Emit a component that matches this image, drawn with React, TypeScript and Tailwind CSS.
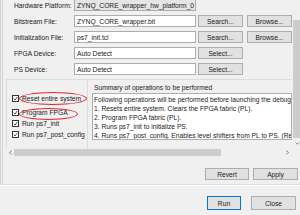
import React from 'react';

const Btn: React.FC<{ label: string; w: string; h?: string; primary?: boolean }> = ({ label, w, h = 'h-[12px]', primary }) => (
  <div
    className={`${w} ${h} shrink-0 flex items-center justify-center bg-[#e1e1e1] border ${
      primary ? 'border-[#0078d7]' : 'border-[#adadad]'
    } text-[#1a1a1a]`}
  >
    {label}
  </div>
);

const Check: React.FC<{ label: string }> = ({ label }) => (
  <div className="h-[11px] flex items-center gap-[3px]">
    <div className="w-[7px] h-[7px] border border-[#333] bg-white flex items-center justify-center">
      <svg width="5" height="5" viewBox="0 0 10 10" fill="none" stroke="#222" strokeWidth="1.6">
        <polyline points="1.5 5.5 4 8 8.5 2" />
      </svg>
    </div>
    <span className="whitespace-nowrap">{label}</span>
  </div>
);

const FormRow: React.FC<{ label: string; value: string; combo?: boolean; buttons: string[] }> = ({ label, value, combo, buttons }) => (
  <div className="h-[12px] flex items-center shrink-0">
    <div className="w-[60px] shrink-0 whitespace-nowrap">{label}</div>
    <div
      className={`w-[122px] h-full shrink-0 border flex items-center px-[2px] whitespace-nowrap overflow-hidden ${
        combo ? 'bg-[#e5e5e5] border-[#acacac] justify-between' : 'bg-white border-[#abadb3]'
      }`}
    >
      <span>{value}</span>
      {combo && (
        <svg width="6" height="4" viewBox="0 0 8 5" fill="none" stroke="#555" strokeWidth="1" className="mr-[3px]">
          <polyline points="1 1 4 4 7 1" />
        </svg>
      )}
    </div>
    <div className="flex ml-[2px] gap-[4px]">
      {buttons.map((b) => (
        <Btn key={b} label={b} w="w-[45px]" />
      ))}
    </div>
  </div>
);

const summary = [
  'Following operations will be performed before launching the debugger.',
  '1. Resets entire system. Clears the FPGA fabric (PL).',
  '2. Program FPGA fabric (PL).',
  '3. Runs ps7_init to initialize PS.',
  '4. Runs ps7_post_config. Enables level shifters from PL to PS. (Requires',
];

export default function App() {
  return (
    <div className="relative w-[300px] h-[215px] overflow-hidden bg-[#f0f0f0] text-[6.7px] leading-[9px] text-[#1a1a1a] font-['Liberation_Sans',Arial,sans-serif] flex flex-col">
      <div className="h-[185px] flex border-b border-[#dcdcdc] shrink-0">
        {/* left tree strip */}
        <div className="w-[10px] bg-white border-r border-[#d5d5d5] flex flex-col justify-between overflow-hidden">
          <div className="flex flex-col pt-[2px]">
            {[']', 'System', 'System', 'Web'].map((t, i) => (
              <div key={i} className="h-[10px] flex justify-end whitespace-nowrap">
                {t}
              </div>
            ))}
          </div>
          <div className="mb-[16px] h-[6px]">
            <svg width="6" height="6" viewBox="0 0 6 6" fill="none" stroke="#666" strokeWidth="0.8">
              <polyline points="-1 2 2 2 2 0.5 5 3 2 5.5 2 4 -1 4" />
            </svg>
          </div>
        </div>

        {/* right pane */}
        <div className="flex-1 flex flex-col border-l border-[#d5d5d5] ml-px pl-[3px]">
          <div className="h-[157px] flex flex-col shrink-0">
            <div className="h-[148px] flex">
              <div className="flex-1 overflow-hidden">
                <div className="-mt-[1px] pl-[8px] flex flex-col gap-[4px]">
                  <FormRow label="Hardware Platform:" value="ZYNQ_CORE_wrapper_hw_platform_0" combo buttons={[]} />
                  <FormRow label="Bitstream File:" value="ZYNQ_CORE_wrapper.bit" buttons={['Search...', 'Browse...']} />
                  <FormRow label="Initialization File:" value="ps7_init.tcl" buttons={['Search...', 'Browse...']} />
                  <FormRow label="FPGA Device:" value="Auto Detect" buttons={['Select...']} />
                  <FormRow label="PS Device:" value="Auto Detect" buttons={['Select...']} />
                </div>
                <div className="mt-[4px] flex h-[80px] border-t border-[#dcdcdc]">
                  <div className="w-[82px] shrink-0 border-l border-r border-[#dcdcdc] pl-[5px] pt-[13px] flex flex-col">
                    <Check label="Reset entire system" />
                    <div className="h-[3px]" />
                    <Check label="Program FPGA" />
                    <Check label="Run ps7_init" />
                    <Check label="Run ps7_post_config" />
                  </div>
                  <div className="flex-1 pl-[4px] pt-[3px] flex flex-col">
                    <div className="pl-[2px] whitespace-nowrap">Summary of operations to be performed</div>
                    <div className="mt-[1px] w-[200px] h-[47px] bg-white border border-[#abadb3] px-[1px] pt-[1px] overflow-hidden">
                      {summary.map((l) => (
                        <div key={l} className="whitespace-nowrap">
                          {l}
                        </div>
                      ))}
                    </div>
                  </div>
                </div>
              </div>
              {/* vertical scrollbar */}
              <div className="w-[10px] shrink-0 flex flex-col">
                <div className="h-[20px]" />
                <div className="mx-[1px] h-[118px] bg-[#cdcdcd]" />
                <div className="h-[10px] flex items-center justify-center">
                  <svg width="5" height="3" viewBox="0 0 6 4" fill="none" stroke="#606060" strokeWidth="1">
                    <polyline points="0.5 0.5 3 3 5.5 0.5" />
                  </svg>
                </div>
              </div>
            </div>
            {/* horizontal scrollbar */}
            <div className="h-[9px] flex">
              <div className="flex-1 flex items-center">
                <div className="w-[8px] flex justify-center">
                  <svg width="3" height="5" viewBox="0 0 4 6" fill="none" stroke="#606060" strokeWidth="1">
                    <polyline points="3.5 0.5 0.5 3 3.5 5.5" />
                  </svg>
                </div>
                <div className="w-[207px] h-[7px] bg-[#cdcdcd]" />
                <div className="flex-1" />
                <div className="w-[10px] flex justify-center">
                  <svg width="3" height="5" viewBox="0 0 4 6" fill="none" stroke="#606060" strokeWidth="1">
                    <polyline points="0.5 0.5 3.5 3 0.5 5.5" />
                  </svg>
                </div>
              </div>
              <div className="w-[10px]" />
            </div>
          </div>
          <div className="flex-1 flex justify-end items-start pt-[11px] pr-[4px] gap-[4px]">
            <Btn label="Revert" w="w-[44px]" />
            <Btn label="Apply" w="w-[45px]" />
          </div>
        </div>
      </div>

      <div className="flex-1 flex justify-end items-start pt-[10px] pr-[4px] gap-[10px] border-t border-white">
        <Btn label="Run" w="w-[34px]" h="h-[14px]" primary />
        <Btn label="Close" w="w-[45px]" h="h-[14px]" />
      </div>

      {/* red annotation ellipses */}
      <div className="absolute left-[19px] top-[92px] w-[68px] h-[13px] rounded-[50%] border-[1.5px] border-[#e3262c]" />
      <div className="absolute left-[19px] top-[108px] w-[59px] h-[12px] rounded-[50%] border-[1.5px] border-[#e3262c]" />
    </div>
  );
}
